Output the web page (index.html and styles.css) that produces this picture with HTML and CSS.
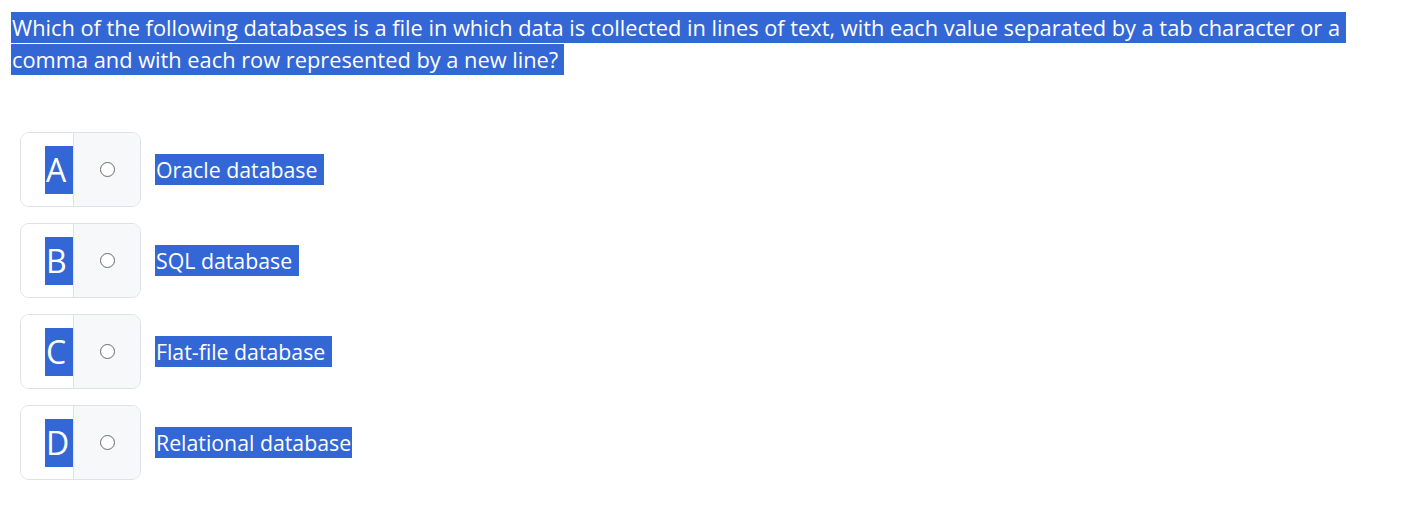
FILE: index.html
```html
<!DOCTYPE html>
<html lang="en">

<head>
	<meta charset="UTF-8" />
	<meta name="viewport" content="width=device-width, initial-scale=1.0" />
	<title>Question</title>
	<link rel="stylesheet" href="styles.css">
</head>

<body>
	<div class="quiz">
		<p class="question"><span class="sel">Which of the following databases is a file in which data is collected in lines of text, with each value separated by a tab character or a&nbsp;<br>comma and with each row represented by a new line?&nbsp;</span></p>

		<div class="options">
			<div class="option">
				<div class="choice">
					<div class="choice-letter"><span class="sel letter">A</span></div>
					<div class="choice-radio"><span class="radio"></span></div>
				</div>
				<span class="sel answer">Oracle database&nbsp;</span>
			</div>
			<div class="option">
				<div class="choice">
					<div class="choice-letter"><span class="sel letter">B</span></div>
					<div class="choice-radio"><span class="radio"></span></div>
				</div>
				<span class="sel answer">SQL database&nbsp;</span>
			</div>
			<div class="option">
				<div class="choice">
					<div class="choice-letter"><span class="sel letter">C</span></div>
					<div class="choice-radio"><span class="radio"></span></div>
				</div>
				<span class="sel answer">Flat-file database&nbsp;</span>
			</div>
			<div class="option">
				<div class="choice">
					<div class="choice-letter"><span class="sel letter">D</span></div>
					<div class="choice-radio"><span class="radio"></span></div>
				</div>
				<span class="sel answer">Relational database</span>
			</div>
		</div>
	</div>
</body>

</html>
```

FILE: styles.css
```css
body {
	margin: 0;
	background: #ffffff;
	font-family: "Open Sans", "Noto Sans", Arial, sans-serif;
	color: #212529;
}

.quiz {
	padding: 12px 0 0 11px;
}

.sel {
	background-color: #3367d6;
	color: #ffffff;
}

.question {
	margin: 0;
	width: 1380px;
	font-size: 21.8px;
	line-height: 32px;
}

.question .sel {
	padding: 1px 0 1px 1px;
	-webkit-box-decoration-break: clone;
	box-decoration-break: clone;
}

.options {
	display: flex;
	flex-direction: column;
	gap: 16px;
	margin-top: 56px;
	margin-left: 9px;
}

.option {
	display: flex;
	align-items: center;
	gap: 14px;
}

.choice {
	display: flex;
	width: 121px;
	height: 75px;
	box-sizing: border-box;
	border: 1px solid #dee2e6;
	border-radius: 9px;
	overflow: hidden;
}

.choice-letter {
	width: 53px;
	display: flex;
	align-items: center;
	padding-left: 24px;
	box-sizing: border-box;
	border-right: 1px solid #dee2e6;
	background: #ffffff;
}

.letter {
	display: inline-block;
	width: 28px;
	height: 48px;
	line-height: 48px;
	font-size: 32px;
	padding-left: 1px;
	box-sizing: border-box;
}

.choice-radio {
	flex: 1;
	display: flex;
	align-items: center;
	justify-content: center;
	background: #f7f8fa;
}

.radio {
	width: 15px;
	height: 15px;
	box-sizing: border-box;
	border: 1.5px solid #6a6a6a;
	border-radius: 50%;
	background: #ffffff;
}

.answer {
	font-size: 21.3px;
	line-height: 31px;
	padding: 0 1px;
}
```
